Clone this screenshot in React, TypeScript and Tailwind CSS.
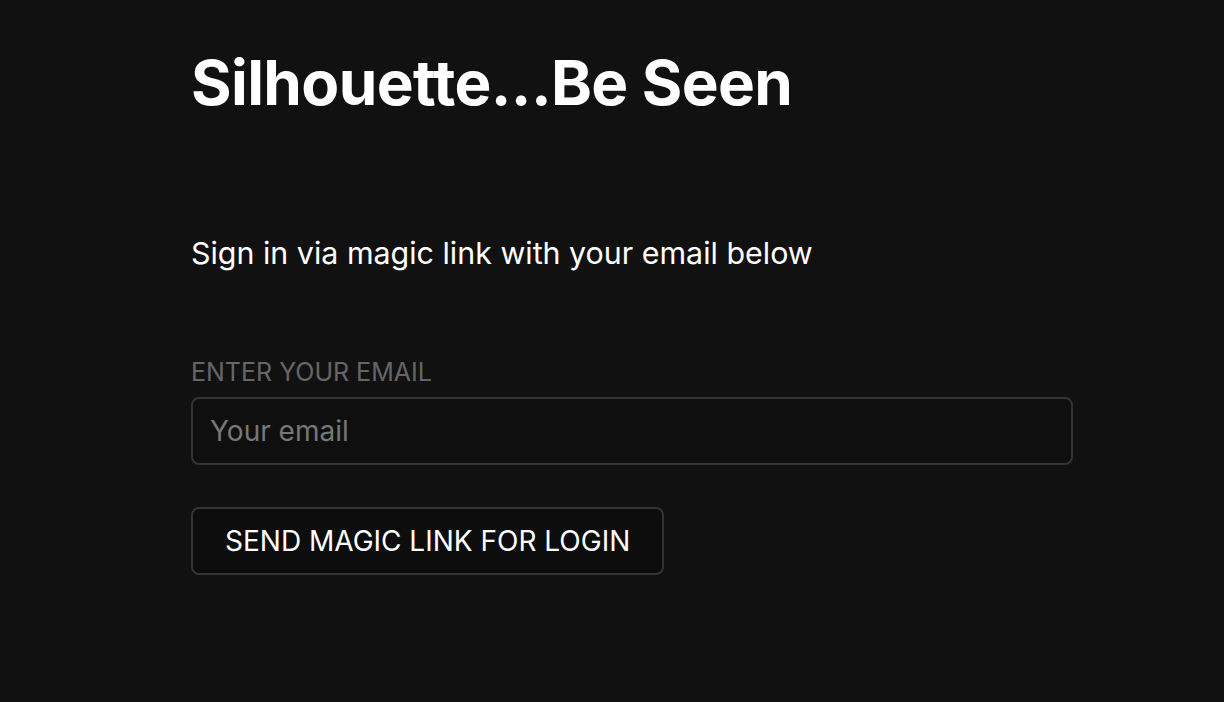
export default function App() {
  return (
    <div
      className="min-h-[702px] w-full bg-[#111111] text-white"
      style={{ fontFamily: 'Inter, "Noto Sans", sans-serif' }}
    >
      <div className="w-[882px] ml-[191px] pt-[46px]">
        <h1 className="text-[62px] font-bold leading-[1.2] tracking-[-0.01em] [font-feature-settings:'liga'_0,'calt'_0]">
          Silhouette...Be Seen
        </h1>
        <p className="mt-[114px] text-[30.4px] leading-[1.3]">Sign in via magic link with your email below</p>
        <div className="mt-[82px] flex flex-col">
          <label className="text-[25px] leading-[1.3] text-[#666666]">ENTER YOUR EMAIL</label>
          <input
            type="email"
            placeholder="Your email"
            className="mt-[9px] h-[68px] w-full rounded-[8px] border-2 border-[#333333] bg-[#0f0f0f] px-[17px] text-[28px] text-white placeholder:text-[#777777] outline-none"
          />
          <div className="mt-[42px]">
            <button className="h-[68px] rounded-[8px] border-2 border-[#333333] bg-[#0d0d0d] px-[32px] text-[28px] text-white">
              SEND MAGIC LINK FOR LOGIN
            </button>
          </div>
        </div>
      </div>
    </div>
  );
}
